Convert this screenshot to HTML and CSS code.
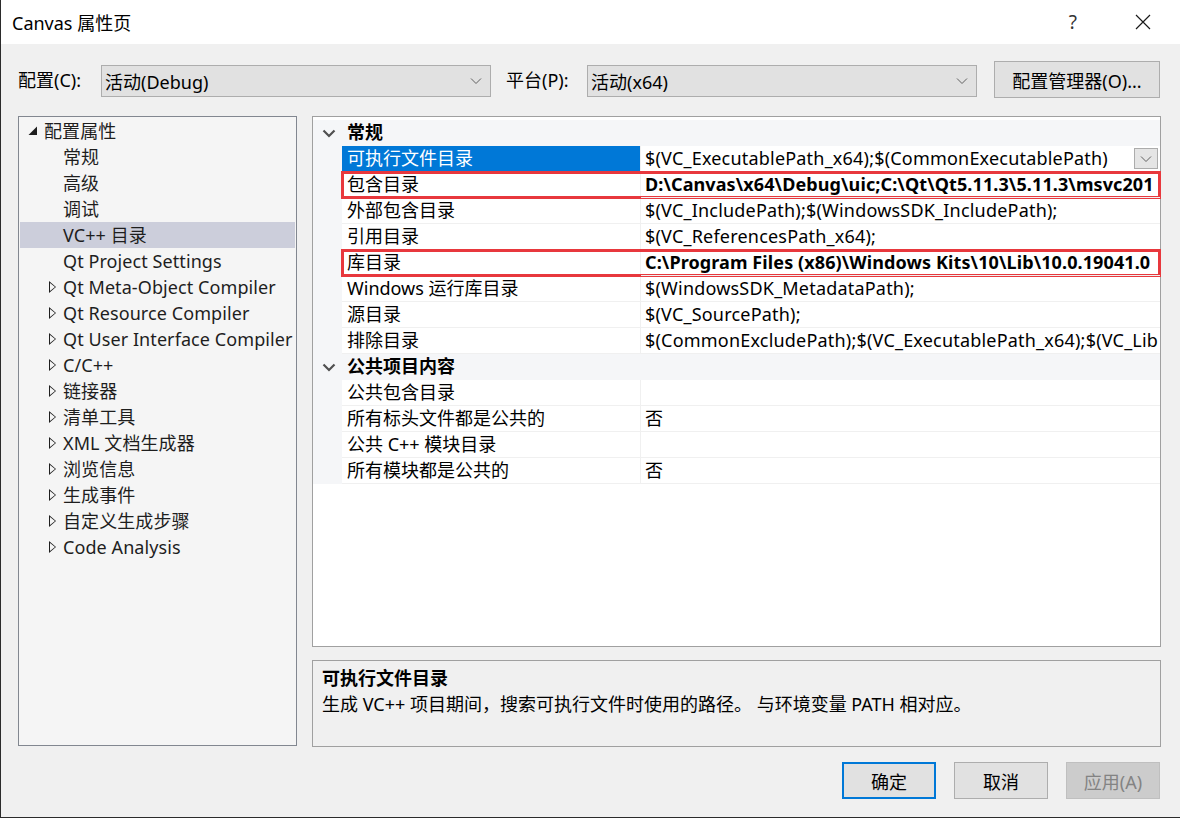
FILE: index.html
```html
<!DOCTYPE html>
<html lang="zh-CN">
<head>
  <meta charset="UTF-8" />
  <title>Canvas 属性页</title>
  <link rel="stylesheet" href="styles.css">
</head>
<body>
  <div class="window">
    <div class="titlebar">
      <span class="title">Canvas 属性页</span>
      <span class="help">?</span>
      <svg class="close" width="16" height="16" viewBox="0 0 16 16">
        <path d="M1 1 L15 15 M15 1 L1 15" stroke="#1a1a1a" stroke-width="1.2" fill="none"/>
      </svg>
    </div>

    <div class="content">
      <div class="config-row">
        <label class="cfg-label">配置(C):</label>
        <div class="combo combo-config">
          <span>活动(Debug)</span>
          <svg class="chev" width="12" height="8" viewBox="0 0 12 8"><path d="M1 1.5 L6 6.5 L11 1.5" stroke="#606060" stroke-width="1" fill="none"/></svg>
        </div>
        <label class="cfg-label platform">平台(P):</label>
        <div class="combo combo-platform">
          <span>活动(x64)</span>
          <svg class="chev" width="12" height="8" viewBox="0 0 12 8"><path d="M1 1.5 L6 6.5 L11 1.5" stroke="#606060" stroke-width="1" fill="none"/></svg>
        </div>
        <button class="btn btn-manager">配置管理器(O)...</button>
      </div>

      <div class="main">
        <div class="tree">
          <div class="tree-item root">
            <svg class="exp" width="10" height="10" viewBox="0 0 10 10"><polygon points="9,0.5 9,9 0.5,9" fill="#1e1e1e"/></svg>
            配置属性
          </div>
          <div class="tree-item child">常规</div>
          <div class="tree-item child">高级</div>
          <div class="tree-item child">调试</div>
          <div class="tree-item child selected">VC++ 目录</div>
          <div class="tree-item child">Qt Project Settings</div>
          <div class="tree-item child closed">Qt Meta-Object Compiler</div>
          <div class="tree-item child closed">Qt Resource Compiler</div>
          <div class="tree-item child closed">Qt User Interface Compiler</div>
          <div class="tree-item child closed">C/C++</div>
          <div class="tree-item child closed">链接器</div>
          <div class="tree-item child closed">清单工具</div>
          <div class="tree-item child closed">XML 文档生成器</div>
          <div class="tree-item child closed">浏览信息</div>
          <div class="tree-item child closed">生成事件</div>
          <div class="tree-item child closed">自定义生成步骤</div>
          <div class="tree-item child closed">Code Analysis</div>
        </div>

        <div class="right">
          <div class="grid">
            <div class="cat-row">
              <span class="gutter"><svg width="14" height="9" viewBox="0 0 14 9"><path d="M1.5 1.5 L7 7 L12.5 1.5" stroke="#505050" stroke-width="2.2" fill="none"/></svg></span>
              <span class="cat-name">常规</span>
            </div>
            <div class="prop-row active">
              <span class="gutter"></span>
              <div class="cells">
                <span class="name">可执行文件目录</span>
                <span class="value">$(VC_ExecutablePath_x64);$(CommonExecutablePath)
                  <span class="drop"><svg width="12" height="8" viewBox="0 0 12 8"><path d="M1 1.5 L6 6.5 L11 1.5" stroke="#606060" stroke-width="1" fill="none"/></svg></span>
                </span>
              </div>
            </div>
            <div class="prop-row marked">
              <span class="gutter"></span>
              <div class="cells">
                <span class="name">包含目录</span>
                <span class="value bold">D:\Canvas\x64\Debug\uic;C:\Qt\Qt5.11.3\5.11.3\msvc201</span>
              </div>
            </div>
            <div class="prop-row">
              <span class="gutter"></span>
              <div class="cells">
                <span class="name">外部包含目录</span>
                <span class="value">$(VC_IncludePath);$(WindowsSDK_IncludePath);</span>
              </div>
            </div>
            <div class="prop-row">
              <span class="gutter"></span>
              <div class="cells">
                <span class="name">引用目录</span>
                <span class="value">$(VC_ReferencesPath_x64);</span>
              </div>
            </div>
            <div class="prop-row marked">
              <span class="gutter"></span>
              <div class="cells">
                <span class="name">库目录</span>
                <span class="value bold">C:\Program Files (x86)\Windows Kits\10\Lib\10.0.19041.0</span>
              </div>
            </div>
            <div class="prop-row">
              <span class="gutter"></span>
              <div class="cells">
                <span class="name">Windows 运行库目录</span>
                <span class="value">$(WindowsSDK_MetadataPath);</span>
              </div>
            </div>
            <div class="prop-row">
              <span class="gutter"></span>
              <div class="cells">
                <span class="name">源目录</span>
                <span class="value">$(VC_SourcePath);</span>
              </div>
            </div>
            <div class="prop-row">
              <span class="gutter"></span>
              <div class="cells">
                <span class="name">排除目录</span>
                <span class="value">$(CommonExcludePath);$(VC_ExecutablePath_x64);$(VC_Lib</span>
              </div>
            </div>
            <div class="cat-row">
              <span class="gutter"><svg width="14" height="9" viewBox="0 0 14 9"><path d="M1.5 1.5 L7 7 L12.5 1.5" stroke="#505050" stroke-width="2.2" fill="none"/></svg></span>
              <span class="cat-name">公共项目内容</span>
            </div>
            <div class="prop-row">
              <span class="gutter"></span>
              <div class="cells">
                <span class="name">公共包含目录</span>
                <span class="value"></span>
              </div>
            </div>
            <div class="prop-row">
              <span class="gutter"></span>
              <div class="cells">
                <span class="name">所有标头文件都是公共的</span>
                <span class="value">否</span>
              </div>
            </div>
            <div class="prop-row">
              <span class="gutter"></span>
              <div class="cells">
                <span class="name">公共 C++ 模块目录</span>
                <span class="value"></span>
              </div>
            </div>
            <div class="prop-row">
              <span class="gutter"></span>
              <div class="cells">
                <span class="name">所有模块都是公共的</span>
                <span class="value">否</span>
              </div>
            </div>
          </div>

          <div class="desc">
            <div class="desc-title">可执行文件目录</div>
            <div class="desc-text">生成 VC++ 项目期间，搜索可执行文件时使用的路径。 与环境变量 PATH 相对应。</div>
          </div>
        </div>
      </div>

      <div class="buttons">
        <button class="btn btn-ok">确定</button>
        <button class="btn">取消</button>
        <button class="btn btn-disabled">应用(A)</button>
      </div>
    </div>
  </div>
</body>
</html>
```

FILE: styles.css
```css
html, body {
  margin: 0;
  padding: 0;
}

body {
  font-family: "Noto Sans", "Noto Sans CJK SC", sans-serif;
  font-size: 18px;
  color: #000;
  background: #f0f0f0;
}

.window {
  width: 1180px;
  height: 818px;
  box-sizing: border-box;
  border-left: 1px solid #2b2b2b;
  border-bottom: 1px solid #2b2b2b;
  background: #f0f0f0;
  display: flex;
  flex-direction: column;
  overflow: hidden;
}

.titlebar {
  height: 44px;
  background: #fff;
  display: flex;
  align-items: center;
  padding-left: 11px;
  flex-shrink: 0;
}

.title {
  flex: 1;
  font-size: 18px;
}

.help {
  font-size: 19px;
  color: #333;
  margin-right: 58px;
}

.close {
  margin-right: 29px;
}

.content {
  padding: 0 19px 0 17px;
  display: flex;
  flex-direction: column;
}

/* config row */
.config-row {
  display: flex;
  align-items: center;
  margin-top: 17px;
  height: 37px;
}

.cfg-label {
  width: 83px;
  line-height: 1;
}

.cfg-label.platform {
  width: 81px;
  margin-left: 15px;
}

.combo {
  height: 32px;
  box-sizing: border-box;
  background: #e1e1e1;
  border: 1px solid #adadad;
  display: flex;
  align-items: center;
  justify-content: space-between;
  padding: 0 8px 0 3px;
  margin-top: 3px;
}

.combo-config {
  width: 390px;
}

.combo-platform {
  width: 390px;
}

.btn {
  font-family: inherit;
  font-size: 18px;
  background: #e1e1e1;
  border: 1px solid #adadad;
  color: #000;
  height: 37px;
  box-sizing: border-box;
  padding: 0;
}

.btn-manager {
  width: 166px;
  margin-left: 17px;
}

/* main area */
.main {
  display: flex;
  margin-top: 18px;
  height: 631px;
  gap: 15px;
}

.tree {
  width: 279px;
  height: 630px;
  box-sizing: border-box;
  border: 1px solid #828790;
  background: #f5f5f5;
  padding: 1px;
}

.tree-item {
  height: 26px;
  line-height: 26px;
  display: flex;
  align-items: center;
  white-space: nowrap;
  position: relative;
  color: #1e1e1e;
  letter-spacing: 0.08px;
}

.tree-item.root {
  padding-left: 24px;
}

.tree-item.root .exp {
  position: absolute;
  left: 8px;
  top: 8px;
}

.tree-item.child {
  padding-left: 43px;
}

.tree-item.selected {
  background: #cccedb;
}

.tree-item.closed::before {
  content: "";
  position: absolute;
  left: 29px;
  top: 7px;
  width: 0;
  height: 0;
  border-top: 6px solid transparent;
  border-bottom: 6px solid transparent;
  border-left: 7px solid #1e1e1e;
}

.tree-item.closed::after {
  content: "";
  position: absolute;
  left: 30px;
  top: 9px;
  width: 0;
  height: 0;
  border-top: 4px solid transparent;
  border-bottom: 4px solid transparent;
  border-left: 5px solid #f5f5f5;
}

.right {
  width: 849px;
  display: flex;
  flex-direction: column;
  gap: 13px;
}

.grid {
  height: 531px;
  box-sizing: border-box;
  border: 1px solid #a0a0a0;
  background: #fff;
  padding-top: 3px;
}

.cat-row,
.prop-row {
  display: flex;
  height: 26px;
  line-height: 25px;
  white-space: nowrap;
}

.cat-row {
  background: #f5f6f8;
  font-weight: bold;
}

.gutter {
  width: 29px;
  flex-shrink: 0;
  background: #f5f6f8;
  display: flex;
  align-items: center;
  justify-content: center;
}

.cat-row .gutter svg {
  margin-top: 1px;
  margin-left: 3px;
}

.cat-name {
  padding-left: 5px;
}

.cells {
  flex: 1;
  display: flex;
  min-width: 0;
  position: relative;
}

.prop-row .name {
  width: 299px;
  flex-shrink: 0;
  box-sizing: border-box;
  padding-left: 5px;
  border-bottom: 1px solid #f0f0f0;
  border-right: 1px solid #f0f0f0;
  overflow: hidden;
}

.prop-row .value {
  flex: 1;
  min-width: 0;
  padding-left: 4px;
  border-bottom: 1px solid #f0f0f0;
  overflow: hidden;
  position: relative;
  letter-spacing: 0.2px;
}

.prop-row .value.bold {
  font-weight: bold;
  letter-spacing: 0.1px;
}

.prop-row.active .name {
  background: #0078d7;
  color: #fff;
}

.prop-row.marked .cells {
  outline: 3px solid #e8383d;
  outline-offset: -2px;
  z-index: 1;
}

.drop {
  position: absolute;
  right: 2px;
  top: 2px;
  width: 24px;
  height: 21px;
  box-sizing: border-box;
  background: #e5e5e5;
  border: 1px solid #acacac;
  display: flex;
  align-items: center;
  justify-content: center;
}

.desc {
  height: 87px;
  box-sizing: border-box;
  border: 1px solid #a0a0a0;
  background: #f0f0f0;
  padding: 4px 9px;
}

.desc-title {
  font-weight: bold;
  line-height: 26px;
}

.desc-text {
  line-height: 26px;
}

.buttons {
  display: flex;
  justify-content: flex-end;
  gap: 18px;
  margin-top: 15px;
  margin-right: 1px;
}

.buttons .btn {
  width: 94px;
}

.btn-ok {
  border: 2px solid #0078d7;
}

.btn-disabled {
  background: #cccccc;
  border-color: #bfbfbf;
  color: #838383;
}
```
